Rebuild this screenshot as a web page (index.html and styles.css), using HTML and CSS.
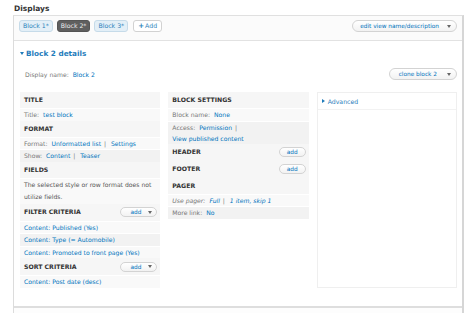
FILE: index.html
```html
<!DOCTYPE html>
<html lang="en">
<head>
  <meta charset="UTF-8" />
  <title>Views - Displays</title>
  <link rel="stylesheet" href="styles.css">
</head>
<body>

  <h2 class="page-title">Displays</h2>

  <div class="display-panel">
    <!-- Display tabs -->
    <div class="display-top">
      <ul class="tabs">
        <li><a href="#" class="tab">Block 1*</a></li>
        <li><a href="#" class="tab active">Block 2*</a></li>
        <li><a href="#" class="tab">Block 3*</a></li>
        <li><a href="#" class="tab tab-add"><b>+</b>Add</a></li>
      </ul>
      <div class="dropbutton pill-edit">
        <a href="#" class="dropbutton-action">edit view name/description</a>
        <span class="dropbutton-toggle"><i class="caret"></i></span>
      </div>
    </div>

    <div class="display-body">
      <a href="#" class="details-toggle"><i class="arrow-down"></i>Block 2 details</a>

      <div class="display-name-row">
        <div><span class="label">Display name:</span> <a href="#">Block 2</a></div>
        <div class="dropbutton pill-clone">
          <a href="#" class="dropbutton-action">clone block 2</a>
          <span class="dropbutton-toggle"><i class="caret"></i></span>
        </div>
      </div>

      <div class="columns">
        <!-- First column -->
        <div class="column">
          <div class="bucket">
            <div class="bucket-head">Title</div>
            <div class="setting"><span class="label">Title:</span> <a href="#">test block</a></div>
          </div>
          <div class="bucket">
            <div class="bucket-head">Format</div>
            <div class="setting"><span class="label">Format:</span> <a href="#">Unformatted list</a> <span class="sep">|</span> <a href="#">Settings</a></div>
            <div class="setting even"><span class="label">Show:</span> <a href="#">Content</a> <span class="sep">|</span> <a href="#">Teaser</a></div>
          </div>
          <div class="bucket">
            <div class="bucket-head">Fields</div>
            <div class="setting note">The selected style or row format does not utilize fields.</div>
          </div>
          <div class="bucket">
            <div class="bucket-head with-pill">
              Filter criteria
              <div class="dropbutton pill-add">
                <a href="#" class="dropbutton-action">add</a>
                <span class="dropbutton-toggle"><i class="caret"></i></span>
              </div>
            </div>
            <div class="setting"><a href="#">Content: Published (Yes)</a></div>
            <div class="setting even"><a href="#">Content: Type (= Automobile)</a></div>
            <div class="setting"><a href="#">Content: Promoted to front page (Yes)</a></div>
          </div>
          <div class="bucket">
            <div class="bucket-head with-pill">
              Sort criteria
              <div class="dropbutton pill-add">
                <a href="#" class="dropbutton-action">add</a>
                <span class="dropbutton-toggle"><i class="caret"></i></span>
              </div>
            </div>
            <div class="setting"><a href="#">Content: Post date (desc)</a></div>
          </div>
        </div>

        <!-- Second column -->
        <div class="column">
          <div class="bucket">
            <div class="bucket-head">Block settings</div>
            <div class="setting"><span class="label">Block name:</span> <a href="#">None</a></div>
            <div class="setting even two-line"><span class="label">Access:</span> <a href="#">Permission</a> <span class="sep">|</span><br><a href="#">View published content</a></div>
          </div>
          <div class="bucket">
            <div class="bucket-head with-pill">
              Header
              <div class="dropbutton pill-single"><a href="#" class="dropbutton-action">add</a></div>
            </div>
          </div>
          <div class="bucket">
            <div class="bucket-head with-pill">
              Footer
              <div class="dropbutton pill-single"><a href="#" class="dropbutton-action">add</a></div>
            </div>
          </div>
          <div class="bucket">
            <div class="bucket-head">Pager</div>
            <div class="setting overridden"><span class="label">Use pager:</span> <a href="#">Full</a> <span class="sep">|</span> <a href="#">1 item, skip 1</a></div>
            <div class="setting even"><span class="label">More link:</span> <a href="#">No</a></div>
          </div>
        </div>

        <!-- Third column -->
        <div class="column column-advanced">
          <a href="#" class="advanced-toggle"><i class="arrow-right"></i>Advanced</a>
        </div>
      </div>
    </div>

    <div class="display-foot"></div>
  </div>

</body>
</html>
```

FILE: styles.css
```css
/* Base */
* {
  box-sizing: border-box;
}

body {
  margin: 0;
  padding: 0 10px 0 13px;
  background: #fff;
  color: #333;
  font-family: "DejaVu Sans", Verdana, sans-serif;
  font-size: 6.1px;
}

a {
  color: #0074bd;
  text-decoration: none;
}

.label,
.sep {
  color: #777;
}

.label {
  margin-right: 2px;
}

.sep {
  margin: 0 3px 0 1px;
}

.page-title {
  margin: 0;
  height: 15px;
  line-height: 17px;
  padding-left: 1px;
  font-size: 7.5px;
  font-weight: bold;
  color: #333;
}

/* Outer panel */
.display-panel {
  border-left: 1px solid #dcdcdc;
  border-right: 2px solid #d6d6d6;
  border-top: 1px solid #e0e0e0;
}

.display-top {
  height: 25px;
  display: flex;
  justify-content: space-between;
  align-items: flex-start;
  padding: 4px 5px 0 5px;
  background: #fbfbfb;
  border-bottom: 1px solid #e2e2e2;
}

/* Tabs */
.tabs {
  display: flex;
  gap: 4px;
  margin: 0;
  padding: 0;
  list-style: none;
}

.tab {
  display: block;
  height: 12px;
  line-height: 10px;
  padding: 0 3px;
  font-size: 6.2px;
  border: 1px solid #c6dbe9;
  border-radius: 3px;
  background: #e3eff7;
  color: #2a7fba;
}

.tab.active {
  background: #5f5f5f;
  border-color: #555;
  color: #eee;
}

.tab-add {
  margin-left: 1px;
  padding: 0 4px;
  background: #fff;
  border-color: #d2d2d2;
}

.tab-add b {
  margin-right: 1px;
  font-size: 7px;
}

/* Dropbuttons (pills) */
.dropbutton {
  display: flex;
  align-items: center;
  height: 12px;
  border: 1px solid #d3d3d3;
  border-radius: 6px;
  background: linear-gradient(#fff, #f2f2f2);
  font-size: 5.8px;
  font-weight: normal;
  text-transform: none;
}

.dropbutton-action {
  padding: 0 3px 0 7px;
  line-height: 10px;
}

.dropbutton-toggle {
  display: flex;
  align-items: center;
  justify-content: center;
  width: 14px;
  height: 100%;
}

.caret {
  width: 0;
  height: 0;
  border-top: 3px solid #666;
  border-left: 2px solid transparent;
  border-right: 2px solid transparent;
}

.pill-clone .dropbutton-action {
  padding: 0 5px 0 9px;
}

.pill-add {
  height: 10px;
  border-radius: 5px;
}

.pill-add .dropbutton-action {
  padding: 0 2px 0 9px;
  line-height: 8px;
}

.pill-add .dropbutton-toggle {
  width: 13px;
}

.pill-single {
  height: 10px;
  border-radius: 5px;
}

.pill-single .dropbutton-action {
  padding: 0 7px;
  line-height: 8px;
}

/* Display body */
.display-body {
  padding: 6px 5px 18px 6px;
  border-bottom: 2px solid #dedede;
}

.details-toggle {
  display: flex;
  align-items: center;
  height: 12px;
  font-size: 7.3px;
  font-weight: bold;
  color: #1f7cbb;
}

.arrow-down {
  width: 0;
  height: 0;
  margin-right: 2px;
  border-top: 3px solid #1f7cbb;
  border-left: 2.5px solid transparent;
  border-right: 2.5px solid transparent;
}

.arrow-right {
  width: 0;
  height: 0;
  margin-right: 3px;
  border-left: 3px solid #1f7cbb;
  border-top: 2.5px solid transparent;
  border-bottom: 2.5px solid transparent;
}

.display-name-row {
  display: flex;
  justify-content: space-between;
  align-items: center;
  height: 20px;
  margin-top: 5px;
  padding-left: 5px;
  font-size: 6.1px;
}

/* Columns */
.columns {
  display: grid;
  grid-template-columns: 1fr 1fr 1fr;
  gap: 8px;
  margin-top: 8px;
}

.bucket {
  background: #f6f6f6;
}

.bucket-head {
  height: 16px;
  line-height: 16px;
  padding: 0 4px;
  font-size: 6.2px;
  font-weight: bold;
  text-transform: uppercase;
  color: #333;
}

.bucket-head.with-pill {
  display: flex;
  justify-content: space-between;
  align-items: center;
  height: 17px;
  padding-right: 3px;
}

.setting {
  line-height: 11.5px;
  padding: 0 4px;
  border-top: 1px solid #fff;
  background: #f9f9f9;
}

.setting.even {
  background: #f2f2f2;
}

.setting.note {
  line-height: 12.5px;
  color: #555;
}

.setting.two-line {
  line-height: 11px;
}

.setting.overridden,
.setting.overridden a,
.setting.overridden .label {
  font-style: italic;
}

.column-advanced {
  border: 1px solid #efefef;
}

.advanced-toggle {
  display: flex;
  align-items: center;
  height: 17px;
  padding-left: 4px;
  font-size: 6.2px;
  border-bottom: 1px solid #f2f2f2;
  color: #1f7cbb;
}

.display-foot {
  height: 8px;
  background: #fdfdfd;
}
```
